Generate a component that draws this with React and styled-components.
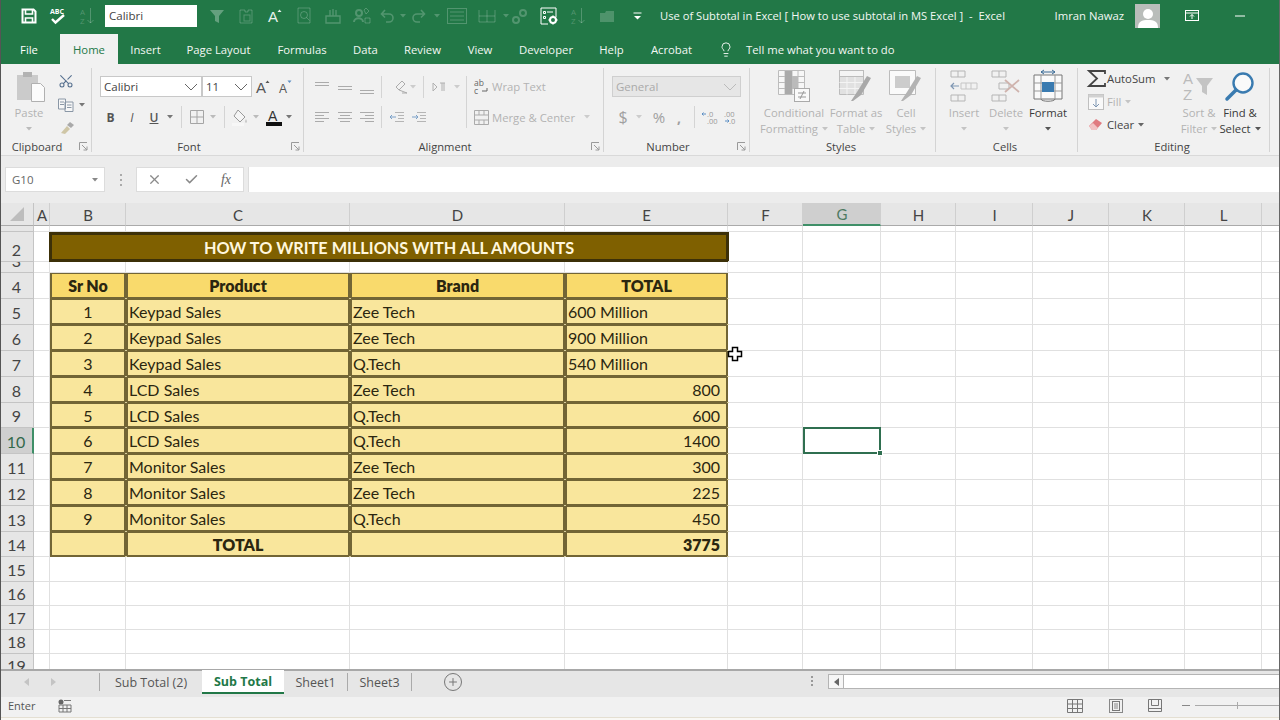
import React from 'react';
import styled, { createGlobalStyle } from 'styled-components';
import { Lightbulb, Scissors, X, Check, Plus } from 'lucide-react';

const Global = createGlobalStyle`
  html, body { margin: 0; padding: 0; background: #fff; }
  * { box-sizing: border-box; }
`;
const UI = `"Open Sans", "Noto Sans", sans-serif`;
const CELLFONT = `Lato, "Open Sans", sans-serif`;

const Page = styled.div`
  position: relative; width: 1280px; height: 720px; overflow: hidden; font-family: ${UI}; color: #444;
  background: #f9f8f4; display: flex; flex-direction: column;
  &::after { content: ''; position: absolute; inset: 0; border-left: 1px solid #555; border-right: 1px solid #666; pointer-events: none; }
`;
const TitleBar = styled.div`height: 34px; background: #227847; display: flex; align-items: center; padding-left: 14px; padding-bottom: 3px; color: #fff; flex: none;`;
const Slot = styled.div`
  width: ${p => p.$w}px; flex: none; display: flex; align-items: center; justify-content: center; margin-left: ${p => p.$ml || 0}px;
  color: ${p => p.$c || 'inherit'}; font-size: ${p => p.$fs || 12}px; font-weight: ${p => p.$fw || 400};
  font-style: ${p => p.$it ? 'italic' : 'normal'}; text-decoration: ${p => p.$un ? 'underline' : 'none'};
`;
const FontBox = styled.div`width: 92px; height: 22px; margin: 0 5px 0 4px; background: #fff; color: #444; font-size: 11.5px; line-height: 22px; padding-left: 4px; flex: none;`;
const DocTitle = styled.div`margin-left: 8px; font-size: 11.2px; white-space: pre; color: #f2f7f3;`;
const UserArea = styled.div`margin-left: auto; display: flex; align-items: center; padding-right: 30px;`;
const UserName = styled.div`font-size: 11.3px; color: #f2f7f3; white-space: nowrap;`;
const Avatar = styled.div`width: 25px; height: 24px; margin-left: 11px; background: #b9bdba; display: flex; align-items: flex-end; justify-content: center; overflow: hidden;`;

const TabBar = styled.div`height: 30px; background: #227847; display: flex; align-items: stretch; padding-left: 20px; flex: none;`;
const FileTab = styled.div`width: 18px; margin-right: 22px; display: flex; align-items: center; justify-content: center; font-size: 11.3px; color: #fff;`;
const Tab = styled.div`
  width: ${p => p.$w}px; flex: none; display: flex; align-items: center; justify-content: center; font-size: 11.3px; white-space: nowrap;
  color: ${p => p.$on ? '#227847' : '#f2f7f3'}; background: ${p => p.$on ? '#f1f1f1' : 'transparent'};
`;
const TellMe = styled.div`margin-left: 12px; font-size: 11.3px; color: #f2f7f3; white-space: nowrap; display: flex; align-items: center;`;
const BulbSlot = styled.div`margin-left: 12px; width: 16px; display: flex; align-items: center; justify-content: center; color: #f2f7f3;`;

const Ribbon = styled.div`height: 92px; background: #f1f1f1; border-bottom: 1px solid #d9d9d9; display: flex; padding-top: 4px; padding-bottom: 3px; flex: none;`;
const Group = styled.div`width: ${p => p.$w}px; flex: none; display: flex; flex-direction: column; border-right: 1px solid #d4d4d4;`;
const GroupBody = styled.div`flex: 1; min-height: 0; display: flex; padding-left: ${p => p.$pl || 0}px; padding-top: ${p => p.$pt || 0}px;`;
const GroupFoot = styled.div`height: 15px; margin-bottom: -2px; flex: none; display: flex; align-items: center; font-size: 11.2px; color: #444; padding-right: 3px;`;
const Launcher = styled.div`width: 14px; flex: none; display: flex; align-items: center; justify-content: flex-end;`;
const FootLabel = styled.div`flex: 1; text-align: center; white-space: nowrap;`;
const Stack = styled.div`display: flex; flex-direction: column; width: ${p => p.$w ? p.$w + 'px' : 'auto'}; flex: none; gap: ${p => p.$gap || 0}px; padding-top: ${p => p.$pt || 0}px;`;
const Row = styled.div`display: flex; align-items: center; height: ${p => p.$h || 22}px; color: ${p => p.$c || '#666'}; font-size: 12px; white-space: nowrap;`;
const Sep = styled.div`width: 1px; height: ${p => p.$h || 22}px; background: #d4d4d4; flex: none; margin-left: ${p => p.$l || 0}px; margin-right: ${p => p.$r || 0}px; align-self: ${p => p.$top ? 'flex-start' : 'center'};`;
const Combo = styled.div`
  width: ${p => p.$w}px; height: 21px; flex: none; background: ${p => p.$off ? '#e6e6e6' : '#fff'}; border: 1px solid ${p => p.$off ? '#cfcfcf' : '#c8c8c8'};
  display: flex; align-items: center; justify-content: space-between; padding: 0 3px 0 3px; font-size: 11.5px; color: ${p => p.$off ? '#aaa' : '#444'};
`;
const Big = styled.div`
  width: ${p => p.$w}px; flex: none; display: flex; flex-direction: column; align-items: center; font-size: 11.3px; line-height: 16px;
  color: ${p => p.$on ? '#3a3a3a' : '#b3b3b3'}; white-space: nowrap;
`;
const BigIcon = styled.div`height: 37px; display: flex; align-items: center; justify-content: center; flex: none; padding-left: ${p => p.$pl || 0}px; padding-bottom: 1px;`;
const CaretLine = styled.div`display: flex; align-items: center; justify-content: center; gap: 4px; height: 16px;`;
const FaintText = styled.span`color: ${p => p.$c || '#b3b3b3'}; margin-left: ${p => p.$ml || 0}px; font-size: 11.3px; display: inline-flex; align-items: center; gap: 4px;`;

const FormulaArea = styled.div`height: 47px; background: #ececec; flex: none; display: flex; align-items: flex-start; padding-top: 11px;`;
const NameBox = styled.div`width: 100px; height: 25px; margin-left: 5px; background: #fff; border: 1px solid #dcdcdc; display: flex; align-items: center; justify-content: space-between; padding: 0 6px; font-size: 11.5px; color: #666; flex: none;`;
const Dots = styled.div`width: 31px; height: 25px; display: flex; align-items: center; justify-content: center; flex: none;`;
const FxButtons = styled.div`width: 108px; height: 25px; background: #fff; border: 1px solid #dcdcdc; display: flex; align-items: center; justify-content: space-between; padding: 0 12px 0 10px; flex: none; color: #8a8a8a;`;
const FxText = styled.span`font-family: "Liberation Serif", serif; font-style: italic; font-size: 14px; color: #666;`;
const FormulaInput = styled.div`flex: 1; height: 25px; margin-left: 4px; background: #fff; border-left: 1px solid #dcdcdc;`;

const Sheet = styled.div`
  position: relative; flex: none; height: 466px; overflow: hidden; background: #fff; display: grid;
  grid-template-columns: 34px 16px 76px 224px 215px 163px 75px 78px 75px 77px 76px 76px 77px 18px;
  grid-template-rows: 23px 6px 30px 11px 26px 26px 26px 26px 26px 25px 26px 26px 26px 26px 25px 25px 24px 24px 24px 24px;
`;
const Corner = styled.div`background: #e6e6e6; border-right: 1px solid #c4c4c4; border-bottom: 1px solid #aaa; display: flex; align-items: center; justify-content: center;`;
const ColHead = styled.div`
  background: ${p => p.$on ? '#cfcfcf' : '#e6e6e6'}; border-right: 1px solid #cfcfcf; border-bottom: ${p => p.$on ? '2px solid #3f8f68' : '1px solid #aaa'};
  display: flex; align-items: center; justify-content: center; font-family: ${CELLFONT}; font-size: 15px; color: ${p => p.$on ? '#4e7a62' : '#444'}; padding-top: 1px; padding-left: 1px;
`;
const RowHead = styled.div`
  background: ${p => p.$on ? '#cfcfcf' : '#e6e6e6'}; border-bottom: 1px solid #c4c4c4; border-right: ${p => p.$on ? '2px solid #3f8f68' : '1px solid #c4c4c4'};
  display: flex; align-items: flex-end; justify-content: center; overflow: hidden; font-family: ${CELLFONT}; font-size: 16px; line-height: 23px; color: ${p => p.$on ? '#33694b' : '#444'};
`;
const Blank = styled.div`border-right: 1px solid #e0e0e0; border-bottom: 1px solid #e0e0e0; min-width: 0;`;
const Selected = styled.div`position: relative; box-shadow: inset 0 0 0 2px #2f6f50; background: #fff; margin: -1px 0 0 0;
  &::after { content: ''; position: absolute; right: -2px; bottom: -2px; width: 4px; height: 4px; background: #2f6f50; border: 1px solid #fff; box-sizing: content-box; }
`;
const Banner = styled.div`
  grid-column: span 4; background: #7f6000; border: 3px solid #3c3008; color: #fff7de; font-family: ${CELLFONT}; font-weight: 700; font-size: 16.3px;
  display: flex; align-items: center; justify-content: center; padding-top: 1px; margin-left: -1px; margin-right: -1px; white-space: nowrap;
`;
const Cell = styled.div`
  position: relative;
  grid-column: span ${p => p.$span || 1}; background: ${p => p.$head ? '#f9da6c' : '#f9e69c'}; border: 2px solid #726535; border-top-width: 1px; border-bottom-width: 2px;
  display: flex; align-items: center; padding: 0 ${p => p.$align === 'right' ? 6 : 1}px 0 1px;
  justify-content: ${p => p.$align === 'right' ? 'flex-end' : p.$align === 'left' ? 'flex-start' : 'center'};
  font-family: ${CELLFONT}; font-size: 16px; font-weight: ${p => p.$bold ? 800 : 400}; color: #2b2610; white-space: nowrap;
  &::after { content: ''; position: absolute; right: -3px; bottom: -2px; width: 2px; height: 1px; background: #d8cfa0; z-index: 1; }
`;
const Cursor = styled.svg`position: absolute; left: 727px; top: 143px;`;

const SheetTabs = styled.div`height: 28px; background: #e6e6e6; border-top: 2px solid #a8a8a8; flex: none; display: flex; align-items: stretch;`;
const NavArrows = styled.div`width: 99px; display: flex; align-items: center; color: #c4c4c4; padding-left: 24px; padding-bottom: 4px; gap: 22px; flex: none;`;
const TabSep = styled.div`width: 1px; height: 18px; background: #aaa; margin-top: 2px; flex: none;`;
const SheetTab = styled.div`
  width: ${p => p.$w}px; flex: none; display: flex; align-items: center; justify-content: center; font-size: 12.5px;
  ${p => p.$on ? 'background:#fff; color:#227847; font-weight:700; border-bottom:2px solid #227847; margin-bottom: 3px; margin-top:-1px;' : 'color:#555; padding-bottom: 4px;'}
`;
const AddSheet = styled.div`width: 18px; height: 18px; margin-left: 32px; margin-top: 2px; border: 1.5px solid #777; border-radius: 50%; color: #777; display: flex; align-items: center; justify-content: center; flex: none;`;
const HDots = styled.div`margin-left: auto; width: 4px; display: flex; flex-direction: column; gap: 2px; margin-top: 5px; align-self: flex-start; margin-right: 13px; flex: none;`;
const HDot = styled.i`width: 2px; height: 2px; background: #999; display: block;`;
const HScroll = styled.div`width: 452px; height: 15px; margin-top: 3px; background: #fff; border: 1px solid #b4b4b4; border-right: none; display: flex; flex: none;`;
const HArrow = styled.div`width: 15px; border-right: 1px solid #b4b4b4; display: flex; align-items: center; justify-content: center; background: #f6f6f6;`;

const StatusBar = styled.div`height: 21px; background: #f1f1f1; flex: none; border-bottom: 1px solid #e4dfd2; display: flex; align-items: center; padding-left: 8px; padding-bottom: 3px; font-size: 11px; color: #555;`;
const StatusRight = styled.div`margin-left: auto; display: flex; align-items: center; color: #777;`;
const Track = styled.div`width: 85px; height: 1px; background: #aaa; margin-left: 5px; display: flex; justify-content: center; align-items: center;`;
const Tick = styled.i`width: 1px; height: 7px; background: #aaa; display: block;`;

/* ---------- icons ---------- */
const Svg = ({ w, h, children, ...r }) => <svg width={w} height={h} viewBox={`0 0 ${w} ${h}`} fill="none" style={{ display: 'block', flex: 'none', overflow: 'visible' }} {...r}>{children}</svg>;
const Caret = ({ c = '#888' }) => <Svg w={6} h={4}><path d="M0 0h6L3 3.5z" fill={c} /></Svg>;
const Chev = ({ c = '#666' }) => <Svg w={14} h={8}><path d="M1 1l6 6 6-6" stroke={c} /></Svg>;
const Launch = () => <Svg w={9} h={9}><path d="M.5 8V.5H8M3 3l5 5M8 4.5V8H4.5" stroke="#9a9a9a" /></Svg>;
const D = 'rgba(255,255,255,.22)';

const SaveIc = () => <Svg w={16} h={16}><path d="M1.5 1.5h11l2 2v11h-13z" stroke="#fff" strokeWidth="2" /><path d="M4.5 2v4h7V2M4.5 15v-5h7v5" stroke="#fff" strokeWidth="1.6" /></Svg>;
const AbcIc = () => <Svg w={18} h={18}><text x="1" y="6.5" fontSize="7" fontWeight="700" fill="#fff" fontFamily="Open Sans">ABC</text><path d="M3 12l3.5 3.5L15 8" stroke="#fff" strokeWidth="2.4" /></Svg>;
const SortFaint = () => <Svg w={14} h={18}><text x="0" y="8" fontSize="8" fill={D}>A</text><text x="0" y="17" fontSize="8" fill={D}>Z</text><path d="M10.5 1v15M7.5 13l3 3 3-3" stroke={D} /></Svg>;
const FilterIc = () => <Svg w={16} h={16}><path d="M1 2h14L10 8v7l-4-2V8z" fill="rgba(255,255,255,.3)" /></Svg>;
const CameraIc = () => <Svg w={16} h={17}><path d="M2 3h5v2h3V3h4v13H2z" stroke={D} /><rect x="6" y="8" width="6" height="6" stroke={D} /></Svg>;
const AGrow = ({ c = '#555', up = '#555', s = 15 }) => <Svg w={14} h={14}><text x="0" y="13" fontSize={s} fontFamily="Liberation Sans" fill={c}>A</text><path d="M9.5 3l2-2.5 2 2.5z" fill={up} /></Svg>;
const AShrink = () => <Svg w={14} h={14}><text x="1" y="13" fontSize="12" fontFamily="Liberation Sans" fill="#555">A</text><path d="M9.5 .5l2 2.5 2-2.5z" fill="#5d8fc4" /></Svg>;
const PreviewIc = () => <Svg w={16} h={17}><path d="M2 1h12v15H2z" stroke={D} /><circle cx="8" cy="8" r="3.5" stroke={D} /><path d="M10.5 10.5l3 3" stroke={D} /></Svg>;
const TouchIc = () => <Svg w={16} h={17}><path d="M1 9h14v7H1zM5 9V3M8 9V2M11 9V3" stroke={D} strokeWidth="1.4" /></Svg>;
const PeopleIc = () => <Svg w={18} h={17}><circle cx="6" cy="6" r="3" stroke={D} strokeWidth="2" /><path d="M1 15c0-5 9-5 9 0" stroke={D} strokeWidth="2" /><path d="M11 3l2-2 3 3-3 3zM12 11h5v5h-5z" stroke={D} /></Svg>;
const UndoIc = () => <Svg w={15} h={14}><path d="M5 1L1.5 5 5 8.5M2 5h7a4 4 0 0 1 0 8H6" stroke={D} strokeWidth="1.6" /></Svg>;
const RedoIc = () => <Svg w={15} h={14}><path d="M10 1l3.5 4L10 8.5M13 5H6a4 4 0 0 0 0 8h3" stroke={D} strokeWidth="1.6" /></Svg>;
const FormIc = () => <Svg w={20} h={16}><rect x=".5" y=".5" width="19" height="15" stroke={D} /><path d="M3 4h14M3 8h14M3 12h14" stroke={D} /></Svg>;
const GridFaint = () => <Svg w={18} h={14}><path d="M1 1v12h16V1M1 7h16M9 1v12" stroke={D} /></Svg>;
const GearFaint = () => <Svg w={18} h={18}><circle cx="12" cy="6" r="3" stroke={D} strokeWidth="2" /><circle cx="5" cy="13" r="3" stroke={D} strokeWidth="2" /></Svg>;
const MacroIc = () => <Svg w={18} h={18}><path d="M1 1h15v9M1 1v16h7" stroke="#fff" /><path d="M3.5 4.5h2v2h-2zM3.5 9.5h2v2h-2z" stroke="#fff" /><path d="M7 5h6" stroke="#fff" /><circle cx="13" cy="13" r="3" stroke="#fff" strokeWidth="2" /><path d="M13 8.5v2M13 15.5v2M8.5 13h2M15.5 13h2" stroke="#fff" strokeWidth="1.5" /></Svg>;
const FolderIc = () => <Svg w={16} h={14}><path d="M1 13V4h5l1-2h8v11z" fill="rgba(255,255,255,.2)" /></Svg>;
const CustomIc = () => <Svg w={9} h={8}><path d="M.5 1h8" stroke="#fff" /><path d="M1 4h7L4.5 7.5z" fill="#fff" /></Svg>;
const DisplayIc = () => <Svg w={14} h={11}><rect x=".5" y=".5" width="13" height="10" stroke="#fff" /><path d="M.5 3h13" stroke="#fff" /><path d="M7 9V4.5M5 6.5l2-2 2 2" stroke="#fff" /></Svg>;
const PersonIc = () => <Svg w={22} h={21}><circle cx="11" cy="7" r="5" fill="#fff" /><path d="M1 21c0-7 4-8 10-8s10 1 10 8z" fill="#fff" /></Svg>;

const PasteIc = () => <Svg w={30} h={31}><rect x="1" y="4" width="21" height="25" fill="#cbcbcb" /><rect x="7" y="1" width="9" height="5" fill="#b3b3b3" /><path d="M15.5 12.5h9l4 4v14h-13z" fill="#fbfbfb" stroke="#b0b0b0" /></Svg>;
const CutIc = () => <Scissors size={18} color="#56708f" strokeWidth={1.6} style={{ transform: 'rotate(-90deg)' }} />;
const CopyIc = () => <Svg w={16} h={14}><path d="M.5 1h7v10h-7zM7 4h8v9.5H7z" stroke="#8a97a6" fill="#f7f7f7" /><path d="M2 4h4M2 6.5h4M9 7h4.5M9 9.5h4.5" stroke="#8a97a6" /></Svg>;
const PainterIc = () => <Svg w={15} h={14}><path d="M10 1l4 3-3 3-4-3z" fill="#a9a9a9" /><path d="M7 5l3 3-5 5-4-1z" fill="#cfc6a6" /></Svg>;
const BordersIc = () => <Svg w={14} h={14}><path d="M.5.5h13v13H.5zM7 .5v13M.5 7h13" stroke="#a5a5a5" /></Svg>;
const FillIc = () => <Svg w={16} h={17}><path d="M6 1l7 7-5 5-6-6z" stroke="#999" fill="#f5f5f5" /><path d="M14 10c1 2 1.5 3 0 4-1.5-1-1-2 0-4z" fill="#c5c5c5" /><rect y="14" width="12" height="3" fill="#f7f7f7" /></Svg>;
const AColor = () => <Svg w={16} h={17}><text x="2" y="12" fontSize="14" fontWeight="400" fontFamily="Liberation Sans" fill="#333">A</text><rect y="13" width="16" height="4" fill="#111" /></Svg>;
const Lines = ({ kind }) => {
  const sets = {
    top: [[1, 15, 2], [1, 15, 5]], mid: [[1, 15, 6], [1, 15, 9]], bot: [[1, 15, 10], [1, 15, 13]],
    left: [[1, 15, 2], [1, 10, 5], [1, 15, 8], [1, 10, 11]], center: [[1, 15, 2], [3, 13, 5], [1, 15, 8], [3, 13, 11]], right: [[1, 15, 2], [6, 15, 5], [1, 15, 8], [6, 15, 11]],
  };
  return <Svg w={16} h={14}>{sets[kind].map(([a, b, yy], i) => <path key={i} d={`M${a} ${yy + .5}H${b}`} stroke="#ababab" />)}</Svg>;
};
const OrientIc = () => <Svg w={16} h={15}><path d="M2 8l6-6 3 3-6 6zM5 11l8 3M8 14h5" stroke="#ababab" /></Svg>;
const RtlIc = () => <Svg w={14} h={10}><path d="M1 1l4 4-4 4zM8 1h5M10 1v8M12 1v8" stroke="#b0b0b0" /></Svg>;
const IndIc = ({ inc }) => <Svg w={16} h={13}><path d="M6 1.5h9M9 4.5h6M9 7.5h6M6 10.5h9" stroke="#b5b5b5" /><path d={inc ? 'M1 6h6M5 4l2 2-2 2' : 'M1 6h6M3 4L1 6l2 2'} stroke="#7aa0c8" /></Svg>;
const WrapIc = () => <Svg w={15} h={15}><text x="0" y="6.5" fontSize="8.5" fill="#666" fontFamily="Open Sans">ab</text><text x="0" y="15" fontSize="8.5" fill="#666" fontFamily="Open Sans">c</text><path d="M13 9v3H8" stroke="#666" /></Svg>;
const MergeIc = () => <Svg w={15} h={15}><path d="M.5.5h14v14H.5zM.5 5h14M.5 10h14M5 .5V5M10 .5V5M5 10v4.5M10 10v4.5" stroke="#ababab" /></Svg>;
const DecIc = ({ inc }) => <Svg w={16} h={15}><text x={inc ? 0 : 5} y="6.5" fontSize="7.5" fill="#999" fontFamily="Open Sans">{inc ? '.00' : '.0'}</text><text x="5" y="14" fontSize="7.5" fill="#999" fontFamily="Open Sans">{inc ? '.0' : '.00'}</text><path d={inc ? 'M1 11h4M3.5 9.5L5 11l-1.5 1.5' : 'M0 4h4M1.5 2.5L0 4l1.5 1.5'} stroke="#5d8fc4" /></Svg>;
const CondIc = () => <Svg w={33} h={32}><path d="M.5.5h26v24H.5zM.5 6.5h26M.5 12.5h26M.5 18.5h26M7 .5v24M14 .5v24M20 .5v24" stroke="#bcbcbc" fill="#f7f7f7" /><rect x="7" y="1" width="7" height="23" fill="#aaa" /><rect x="14" y="7" width="6" height="11" fill="#bbb" /><rect x="16.5" y="18.5" width="15" height="13" fill="#fafafa" stroke="#aaa" /><path d="M20 23h8M20 27h8M26 21l-4 8" stroke="#999" /></Svg>;
const TableIc = () => <Svg w={34} h={32}><path d="M.5.5h24v24H.5z" fill="#e1e1e1" stroke="#bcbcbc" /><path d="M.5 6.5h24M.5 12.5h24M.5 18.5h24M8 .5v24M16 .5v24" stroke="#f4f4f4" /><rect x=".5" y=".5" width="24" height="6" fill="#f4f4f4" stroke="#bcbcbc" /><path d="M14 31l8-6 10-17-4-2-10 16-6 9z" fill="#a9a9a9" /></Svg>;
const CellStyleIc = () => <Svg w={34} h={32}><path d="M.5.5h26v24H.5z" fill="#fafafa" stroke="#bcbcbc" /><rect x="6" y="6" width="15" height="12" fill="#ccc" /><path d="M14 31l8-6 10-17-4-2-10 16-6 9z" fill="#b3b3b3" /></Svg>;
const InsertIc = () => <Svg w={28} h={32}><path d="M1 1h14v6H1zM1 25h14v6H1zM8 25v6M8 1v6" stroke="#b5b5b5" /><path d="M11 13h16v6H11zM16 13v6M21 13v6" stroke="#c5c5c5" /><path d="M1 16h8M4 13l-3 3 3 3" stroke="#7f97b3" strokeWidth="1.2" /></Svg>;
const DeleteIc = () => <Svg w={30} h={32}><path d="M1 1h14v6H1zM8 1v6M1 25h14v6H1zM8 25v6M8 13h10v6H8z" stroke="#b5b5b5" /><path d="M14 10l14 12M28 10L14 22" stroke="#cfb3ad" strokeWidth="1.8" /></Svg>;
const FormatIc = () => <Svg w={30} h={33}><path d="M1 5v24h28V5z" stroke="#777" fill="#fafafa" /><path d="M8 5v24M22 5v24M1 13h28M1 21h28" stroke="#999" /><rect x="9" y="12" width="12" height="10" fill="#3a7bb0" /><path d="M8 2h14M11 0L8 2l3 2M19 0l3 2-3 2" stroke="#3a6b96" /><path d="M8 29c0 3 14 3 14 0" stroke="#777" /></Svg>;
const SigmaIc = () => <Svg w={18} h={17}><path d="M17 4V1H1l8 7.5L1 16h16v-3" stroke="#444" strokeWidth="1.8" /></Svg>;
const FillDown = () => <Svg w={16} h={16}><rect x=".5" y=".5" width="15" height="15" stroke="#bfbfbf" fill="#f9f9f9" /><rect x=".5" y=".5" width="15" height="3" fill="#d1d1d1" /><path d="M8 5v8M5 10l3 3 3-3" stroke="#7f97b3" /></Svg>;
const EraserIc = () => <Svg w={15} h={13}><path d="M1 8l7-7 6 4-6 7H4z" fill="#e07a80" /><path d="M1 8l3 4h4l2-2-5-5z" fill="#f2c2c4" /></Svg>;
const SortBig = () => <Svg w={32} h={32}><text x="0" y="14" fontSize="15" fill="#bbb" fontFamily="Liberation Sans">A</text><text x="0" y="30" fontSize="15" fill="#bbb" fontFamily="Liberation Sans">Z</text><path d="M13 8h17l-6 8v9l-5-3v-6z" fill="#c4c4c4" /></Svg>;
const FindIc = () => <Svg w={30} h={31}><circle cx="18" cy="12" r="9.5" stroke="#3a7bb0" strokeWidth="2.4" fill="#fafafa" /><path d="M11 19L2 28" stroke="#3a7bb0" strokeWidth="3.5" strokeLinecap="round" /></Svg>;
const Grid3 = () => <Svg w={16} h={14}><path d="M.5.5h15v13H.5zM5.5.5v13M10.5.5v13M.5 5h15M.5 9.5h15" stroke="#777" /></Svg>;
const PageIc = () => <Svg w={14} h={14}><rect x=".5" y=".5" width="13" height="13" stroke="#888" /><rect x="3.5" y="2.5" width="7" height="9" stroke="#777" /><path d="M5 5h4M5 7h4M5 9h4" stroke="#888" /></Svg>;
const BreakIc = () => <Svg w={14} h={13}><path d="M.5 12.5V.5h13v12zM3.5.5v6h7v-6M.5 9.5h13" stroke="#777" /></Svg>;
const MacroRec = () => <Svg w={13} h={13}><circle cx="3" cy="3" r="2.5" fill="#666" /><path d="M6 1.5h7M1 6h12v7H1zM5 6v7M9 6v7M1 9.5h12" stroke="#777" /></Svg>;

/* ---------- data ---------- */
const COLS = ['A', 'B', 'C', 'D', 'E', 'F', 'G', 'H', 'I', 'J', 'K', 'L', ''];
const DATA = [
  [1, 'Keypad Sales', 'Zee Tech', '600 Million'], [2, 'Keypad Sales', 'Zee Tech', '900 Million'], [3, 'Keypad Sales', 'Q.Tech', '540 Million'],
  [4, 'LCD Sales', 'Zee Tech', 800], [5, 'LCD Sales', 'Q.Tech', 600], [6, 'LCD Sales', 'Q.Tech', 1400],
  [7, 'Monitor Sales', 'Zee Tech', 300], [8, 'Monitor Sales', 'Zee Tech', 225], [9, 'Monitor Sales', 'Q.Tech', 450],
];
const blanks = (key, n) => Array.from({ length: n }, (_, i) => <Blank key={`${key}-${i}`} />);
const Tail = ({ r }) => (
  <>
    <Blank />
    {r === 10 ? <Selected /> : <Blank />}
    {blanks('t', 6)}
  </>
);

const SheetGrid = () => {
  const rows = [];
  rows.push(<React.Fragment key="1"><RowHead />{blanks('r1', 13)}</React.Fragment>);
  rows.push(<React.Fragment key="2"><RowHead>2</RowHead><Blank /><Banner>HOW TO WRITE MILLIONS WITH ALL AMOUNTS</Banner><Tail r={2} /></React.Fragment>);
  rows.push(<React.Fragment key="3"><RowHead>3</RowHead>{blanks('r3', 13)}</React.Fragment>);
  rows.push(<React.Fragment key="4"><RowHead>4</RowHead><Blank />
    <Cell $head $bold>Sr No</Cell><Cell $head $bold>Product</Cell><Cell $head $bold>Brand</Cell><Cell $head $bold>TOTAL</Cell><Tail r={4} /></React.Fragment>);
  DATA.forEach((d, i) => {
    const r = i + 5;
    const text = typeof d[3] === 'string';
    rows.push(<React.Fragment key={r}><RowHead $on={r === 10}>{r}</RowHead><Blank />
      <Cell>{d[0]}</Cell><Cell $align="left">{d[1]}</Cell><Cell $align="left">{d[2]}</Cell><Cell $align={text ? 'left' : 'right'}>{d[3]}</Cell><Tail r={r} /></React.Fragment>);
  });
  rows.push(<React.Fragment key="14"><RowHead>14</RowHead><Blank />
    <Cell /><Cell $bold>TOTAL</Cell><Cell /><Cell $align="right" $bold>3775</Cell><Tail r={14} /></React.Fragment>);
  [15, 16, 17, 18, 19].forEach(r => rows.push(<React.Fragment key={r}><RowHead>{r}</RowHead>{blanks(`r${r}`, 13)}</React.Fragment>));
  return rows;
};

export default function App() {
  return (
    <Page>
      <Global />
      <TitleBar>
        <Slot $w={29}><SaveIc /></Slot>
        <Slot $w={29}><AbcIc /></Slot>
        <Slot $w={29}><SortFaint /></Slot>
        <FontBox>Calibri</FontBox>
        <Slot $w={29}><FilterIc /></Slot>
        <Slot $w={29}><CameraIc /></Slot>
        <Slot $w={29}><AGrow c="#e8f1ec" up="#e8f1ec" /></Slot>
        <Slot $w={29}><PreviewIc /></Slot>
        <Slot $w={29}><TouchIc /></Slot>
        <Slot $w={29}><PeopleIc /></Slot>
        <Slot $w={22}><UndoIc /></Slot>
        <Slot $w={10}><Caret c={D} /></Slot>
        <Slot $w={20}><RedoIc /></Slot>
        <Slot $w={18}><Caret c={D} /></Slot>
        <Slot $w={22}><FormIc /></Slot>
        <Slot $w={30} $ml={4}><GridFaint /></Slot>
        <Slot $w={8}><Caret c={D} /></Slot>
        <Slot $w={20}><GearFaint /></Slot>
        <Slot $w={30} $ml={4}><MacroIc /></Slot>
        <Slot $w={28}><SortFaint /></Slot>
        <Slot $w={30}><FolderIc /></Slot>
        <Slot $w={30}><CustomIc /></Slot>
        <DocTitle>Use of Subtotal in Excel [ How to use subtotal in MS Excel ]  -  Excel</DocTitle>
        <UserArea>
          <UserName>Imran Nawaz</UserName>
          <Avatar><PersonIc /></Avatar>
          <Slot $w={24} $ml={20}><DisplayIc /></Slot>
          <Slot $w={20} $ml={26}><Svg w={10} h={2}><path d="M0 1h10" stroke="#fff" /></Svg></Slot>
        </UserArea>
      </TitleBar>

      <TabBar>
        <FileTab>File</FileTab>
        <Tab $w={58} $on>Home</Tab>
        <Tab $w={55}>Insert</Tab>
        <Tab $w={91}>Page Layout</Tab>
        <Tab $w={76}>Formulas</Tab>
        <Tab $w={51}>Data</Tab>
        <Tab $w={63}>Review</Tab>
        <Tab $w={52}>View</Tab>
        <Tab $w={80}>Developer</Tab>
        <Tab $w={51}>Help</Tab>
        <Tab $w={69}>Acrobat</Tab>
        <BulbSlot><Lightbulb size={17} strokeWidth={1.4} /></BulbSlot>
        <TellMe>Tell me what you want to do</TellMe>
      </TabBar>

      <Ribbon>
        <Group $w={92}>
          <GroupBody>
            <Big $w={58}><BigIcon $pl={4}><PasteIc /></BigIcon>Paste<CaretLine><Caret c="#bbb" /></CaretLine></Big>
            <Stack $gap={1} $pt={2}>
              <Row $h={22}><Slot $w={16}><CutIc /></Slot></Row>
              <Row $h={23}><Slot $w={16}><CopyIc /></Slot><Slot $w={16}><Caret c="#777" /></Slot></Row>
              <Row $h={22}><Slot $w={18}><PainterIc /></Slot></Row>
            </Stack>
          </GroupBody>
          <GroupFoot><FootLabel>Clipboard</FootLabel><Launcher><Launch /></Launcher></GroupFoot>
        </Group>

        <Group $w={212}>
          <GroupBody $pl={8} $pt={8}>
            <Stack $gap={9}>
              <Row $h={21}>
                <Combo $w={102}>Calibri<Chev /></Combo>
                <Combo $w={50}>11<Chev /></Combo>
                <Slot $w={22}><AGrow /></Slot><Slot $w={22}><AShrink /></Slot>
              </Row>
              <Row $h={22} $c="#555">
                <Slot $w={21} $fw={700}>B</Slot>
                <Slot $w={22} $it>I</Slot>
                <Slot $w={22} $un $fw={600}>U</Slot>
                <Slot $w={10}><Caret c="#777" /></Slot>
                <Sep $l={6} $r={7} />
                <Slot $w={16}><BordersIc /></Slot><Slot $w={16}><Caret c="#bbb" /></Slot>
                <Sep $l={3} $r={7} />
                <Slot $w={16}><FillIc /></Slot><Slot $w={16}><Caret c="#bbb" /></Slot>
                <Slot $w={20}><AColor /></Slot><Slot $w={10}><Caret c="#777" /></Slot>
              </Row>
            </Stack>
          </GroupBody>
          <GroupFoot><FootLabel>Font</FootLabel><Launcher><Launch /></Launcher></GroupFoot>
        </Group>

        <Group $w={300}>
          <GroupBody $pl={10} $pt={8}>
            <Stack $w={152} $gap={9}>
              <Row $h={21}>
                <Slot $w={16}><Lines kind="top" /></Slot><Slot $w={16} $ml={7}><Lines kind="mid" /></Slot><Slot $w={16} $ml={6}><Lines kind="bot" /></Slot>
                <Sep $l={6} $r={12} />
                <Slot $w={16}><OrientIc /></Slot><Slot $w={6}><Caret c="#ccc" /></Slot>
                <Sep $l={7} $r={7} />
                <Slot $w={16}><RtlIc /></Slot><Slot $w={20}><Caret c="#ccc" /></Slot>
              </Row>
              <Row $h={22}>
                <Slot $w={16}><Lines kind="left" /></Slot><Slot $w={16} $ml={7}><Lines kind="center" /></Slot><Slot $w={16} $ml={6}><Lines kind="right" /></Slot>
                <Sep $l={6} $r={7} />
                <Slot $w={16}><IndIc /></Slot><Slot $w={16} $ml={6}><IndIc inc /></Slot>
              </Row>
            </Stack>
            <Sep $h={52} $r={7} $top />
            <Stack $gap={9}>
              <Row $h={21}><WrapIc /><FaintText $ml={3}>Wrap Text</FaintText></Row>
              <Row $h={22}><MergeIc /><FaintText $ml={3}>Merge &amp; Center</FaintText><Slot $w={24}><Caret c="#ccc" /></Slot></Row>
            </Stack>
          </GroupBody>
          <GroupFoot><FootLabel>Alignment</FootLabel><Launcher><Launch /></Launcher></GroupFoot>
        </Group>

        <Group $w={146}>
          <GroupBody $pl={8} $pt={8}>
            <Stack $gap={9}>
              <Row $h={21}><Combo $w={129} $off>General<Chev c="#bbb" /></Combo></Row>
              <Row $h={22} $c="#a0a0a0">
                <Slot $w={22} $fs={16}>$</Slot>
                <Slot $w={10}><Caret c="#ccc" /></Slot>
                <Slot $w={26} $ml={2} $fs={15}>%</Slot>
                <Slot $w={14} $fw={700} $fs={14}>,</Slot>
                <Sep $l={8} $r={7} />
                <Slot $w={16}><DecIc /></Slot>
                <Slot $w={16} $ml={6}><DecIc inc /></Slot>
              </Row>
            </Stack>
          </GroupBody>
          <GroupFoot><FootLabel>Number</FootLabel><Launcher><Launch /></Launcher></GroupFoot>
        </Group>

        <Group $w={186}>
          <GroupBody $pl={13}>
            <Big $w={62}><BigIcon><CondIc /></BigIcon>Conditional<CaretLine>Formatting<Caret c="#c4c4c4" /></CaretLine></Big>
            <Big $w={62}><BigIcon><TableIc /></BigIcon>Format as<CaretLine>Table<Caret c="#c4c4c4" /></CaretLine></Big>
            <Big $w={38}><BigIcon><CellStyleIc /></BigIcon>Cell<CaretLine>Styles<Caret c="#c4c4c4" /></CaretLine></Big>
          </GroupBody>
          <GroupFoot><FootLabel>Styles</FootLabel></GroupFoot>
        </Group>

        <Group $w={142}>
          <GroupBody $pl={7}>
            <Big $w={42}><BigIcon><InsertIc /></BigIcon>Insert<CaretLine><Caret c="#c4c4c4" /></CaretLine></Big>
            <Big $w={42}><BigIcon><DeleteIc /></BigIcon>Delete<CaretLine><Caret c="#c4c4c4" /></CaretLine></Big>
            <Big $w={42} $on><BigIcon><FormatIc /></BigIcon>Format<CaretLine><Caret c="#555" /></CaretLine></Big>
          </GroupBody>
          <GroupFoot><FootLabel>Cells</FootLabel></GroupFoot>
        </Group>

        <Group $w={192}>
          <GroupBody $pl={10}>
            <Stack $w={93} $gap={2}>
              <Row $h={21} $c="#444"><SigmaIc /><FaintText $c="#444" $ml={1}>AutoSum</FaintText><Slot $w={24}><Caret c="#777" /></Slot></Row>
              <Row $h={21}><FillDown /><FaintText $ml={3}>Fill<Caret c="#c4c4c4" /></FaintText></Row>
              <Row $h={21} $c="#444"><EraserIc /><FaintText $c="#444" $ml={4}>Clear<Caret c="#666" /></FaintText></Row>
            </Stack>
            <Big $w={36}><BigIcon><SortBig /></BigIcon>Sort &amp;<CaretLine>Filter<Caret c="#c4c4c4" /></CaretLine></Big>
            <Big $w={46} $on><BigIcon><FindIc /></BigIcon>Find &amp;<CaretLine>Select<Caret c="#555" /></CaretLine></Big>
          </GroupBody>
          <GroupFoot><FootLabel>Editing</FootLabel></GroupFoot>
        </Group>
      </Ribbon>

      <FormulaArea>
        <NameBox>G10<Caret c="#888" /></NameBox>
        <Dots><Svg w={2} h={12}><path d="M1 0v2M1 5v2M1 10v2" stroke="#aaa" strokeWidth="2" /></Svg></Dots>
        <FxButtons><X size={15} strokeWidth={2} /><Check size={15} strokeWidth={2.4} /><FxText>fx</FxText></FxButtons>
        <FormulaInput />
      </FormulaArea>

      <Sheet>
        <Corner><Svg w={16} h={16}><path d="M15 1v14H1z" fill="#bdbdbd" /></Svg></Corner>
        {COLS.map((c, i) => <ColHead key={i} $on={c === 'G'}>{c}</ColHead>)}
        <SheetGrid />
        <Cursor width="16" height="16" viewBox="0 0 16 16"><path d="M5.5 1.5h5v4h4v5h-4v4h-5v-4h-4v-5h4z" fill="#fff" stroke="#000" strokeWidth="1.5" /></Cursor>
      </Sheet>

      <SheetTabs>
        <NavArrows>
          <Svg w={5} h={8}><path d="M5 0v8L0 4z" fill="currentColor" /></Svg>
          <Svg w={5} h={8}><path d="M0 0v8l5-4z" fill="currentColor" /></Svg>
        </NavArrows>
        <TabSep />
        <SheetTab $w={102}>Sub Total (2)</SheetTab>
        <SheetTab $w={82} $on>Sub Total</SheetTab>
        <SheetTab $w={63}>Sheet1</SheetTab>
        <TabSep />
        <SheetTab $w={63}>Sheet3</SheetTab>
        <TabSep />
        <AddSheet><Plus size={12} strokeWidth={2} /></AddSheet>
        <HDots><HDot /><HDot /><HDot /></HDots>
        <HScroll><HArrow><Svg w={5} h={8}><path d="M5 0v8L0 4z" fill="#666" /></Svg></HArrow></HScroll>
      </SheetTabs>

      <StatusBar>
        Enter
        <Slot $w={13} $ml={23}><MacroRec /></Slot>
        <StatusRight>
          <Grid3 />
          <Slot $w={14} $ml={26}><PageIc /></Slot>
          <Slot $w={14} $ml={25}><BreakIc /></Slot>
          <Slot $w={8} $ml={20}><Svg w={8} h={1}><path d="M0 .5h8" stroke="#888" /></Svg></Slot>
          <Track><Tick /></Track>
        </StatusRight>
      </StatusBar>
    </Page>
  );
}
